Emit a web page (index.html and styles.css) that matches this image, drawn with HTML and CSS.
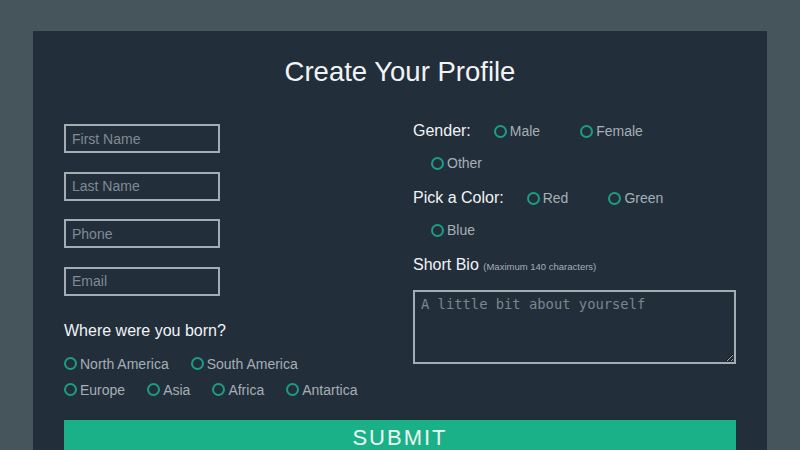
FILE: index.html
```html
<!DOCTYPE html>
<html>
<head>
<meta charset="utf-8">
<link rel="stylesheet" href="styles.css">
</head>
<body>
<form class="card">
  <h1 class="title">Create Your Profile</h1>
  <div class="grid">
    <div class="col-left">
      <div class="fields">
        <input class="field" type="text" placeholder="First Name">
        <input class="field" type="text" placeholder="Last Name">
        <input class="field" type="text" placeholder="Phone">
        <input class="field" type="text" placeholder="Email">
      </div>
      <div class="label-lg born-label">Where were you born?</div>
      <div class="born-row">
        <label class="opt"><input class="radio" type="radio" name="born">North America</label>
        <label class="opt"><input class="radio" type="radio" name="born">South America</label>
      </div>
      <div class="born-row">
        <label class="opt"><input class="radio" type="radio" name="born">Europe</label>
        <label class="opt"><input class="radio" type="radio" name="born">Asia</label>
        <label class="opt"><input class="radio" type="radio" name="born">Africa</label>
        <label class="opt"><input class="radio" type="radio" name="born">Antartica</label>
      </div>
    </div>
    <div class="col-right">
      <div class="group">
        <div class="row">
          <span class="label-lg">Gender:</span>
          <label class="opt"><input class="radio" type="radio" name="gender">Male</label>
          <label class="opt"><input class="radio" type="radio" name="gender">Female</label>
        </div>
        <div class="row indent">
          <label class="opt"><input class="radio" type="radio" name="gender">Other</label>
        </div>
      </div>
      <div class="group">
        <div class="row">
          <span class="label-lg">Pick a Color:</span>
          <label class="opt"><input class="radio" type="radio" name="color">Red</label>
          <label class="opt"><input class="radio" type="radio" name="color">Green</label>
        </div>
        <div class="row indent">
          <label class="opt"><input class="radio" type="radio" name="color">Blue</label>
        </div>
      </div>
      <div class="bio-label"><span class="label-lg">Short Bio</span> <span class="hint">(Maximum 140 characters)</span></div>
      <textarea class="bio" placeholder="A little bit about yourself"></textarea>
    </div>
  </div>
  <button class="submit" type="button">SUBMIT</button>
</form>
</body>
</html>
```

FILE: styles.css
```css
html, body {
  margin: 0;
  padding: 0;
  background: #46545b;
  font-family: "Liberation Sans", Arial, sans-serif;
  overflow: hidden;
}

.card {
  margin: 31px 33px 0;
  padding: 25px 31px 40px;
  background: #232e3b;
  min-height: 500px;
}

.title {
  margin: 0;
  font-size: 27.5px;
  line-height: 32px;
  font-weight: normal;
  text-align: center;
  color: #f1f4f6;
}

.grid {
  margin-top: 27px;
  display: grid;
  grid-template-columns: 1fr 1fr;
  column-gap: 26px;
}

.col-left {
  padding-top: 9px;
}

.fields {
  display: flex;
  flex-direction: column;
  gap: 18.6px;
}

.field {
  width: 156px;
  height: 29px;
  box-sizing: border-box;
  margin: 0;
  padding: 0 6px;
  border: 2px solid #a2aeb4;
  background: transparent;
  font-family: "Liberation Sans", Arial, sans-serif;
  font-size: 14px;
  color: #dfe5e8;
  outline: none;
}

.field::placeholder {
  color: #7f8b92;
}

.label-lg {
  font-size: 16px;
  color: #f1f4f6;
}

.born-label {
  display: block;
  margin-top: 25px;
  line-height: 20px;
}

.born-row {
  display: flex;
  gap: 22px;
  line-height: 26px;
}

.born-label + .born-row {
  margin-top: 10px;
}

.opt {
  display: inline-flex;
  align-items: center;
  font-size: 14px;
  color: #a5afb5;
}

.radio {
  appearance: none;
  -webkit-appearance: none;
  width: 13px;
  height: 13px;
  box-sizing: border-box;
  margin: 0 3px 0 0;
  border: 2px solid #1b9e82;
  border-radius: 50%;
  background: transparent;
}

.group {
  margin-bottom: 3px;
}

.row {
  display: flex;
  align-items: center;
  height: 32px;
  gap: 40px;
}

.row .label-lg {
  margin-right: -17px;
}

.row.indent {
  padding-left: 18px;
}

.bio-label {
  line-height: 32px;
}

.hint {
  font-size: 9.5px;
  color: #a5afb5;
}

.bio {
  display: block;
  width: 100%;
  height: 74px;
  box-sizing: border-box;
  margin-top: 7px;
  padding: 4px 6px;
  border: 2px solid #a2aeb4;
  background: transparent;
  font-family: "DejaVu Sans Mono", monospace;
  font-size: 13.8px;
  color: #dfe5e8;
  resize: vertical;
  outline: none;
}

.bio::placeholder {
  color: #7c868c;
}

.submit {
  display: block;
  width: 100%;
  height: 36px;
  margin-top: 17px;
  padding: 0;
  border: none;
  background: #1ab188;
  font-family: "Liberation Sans", Arial, sans-serif;
  font-size: 22px;
  letter-spacing: 2px;
  color: #eef6f3;
}
```
